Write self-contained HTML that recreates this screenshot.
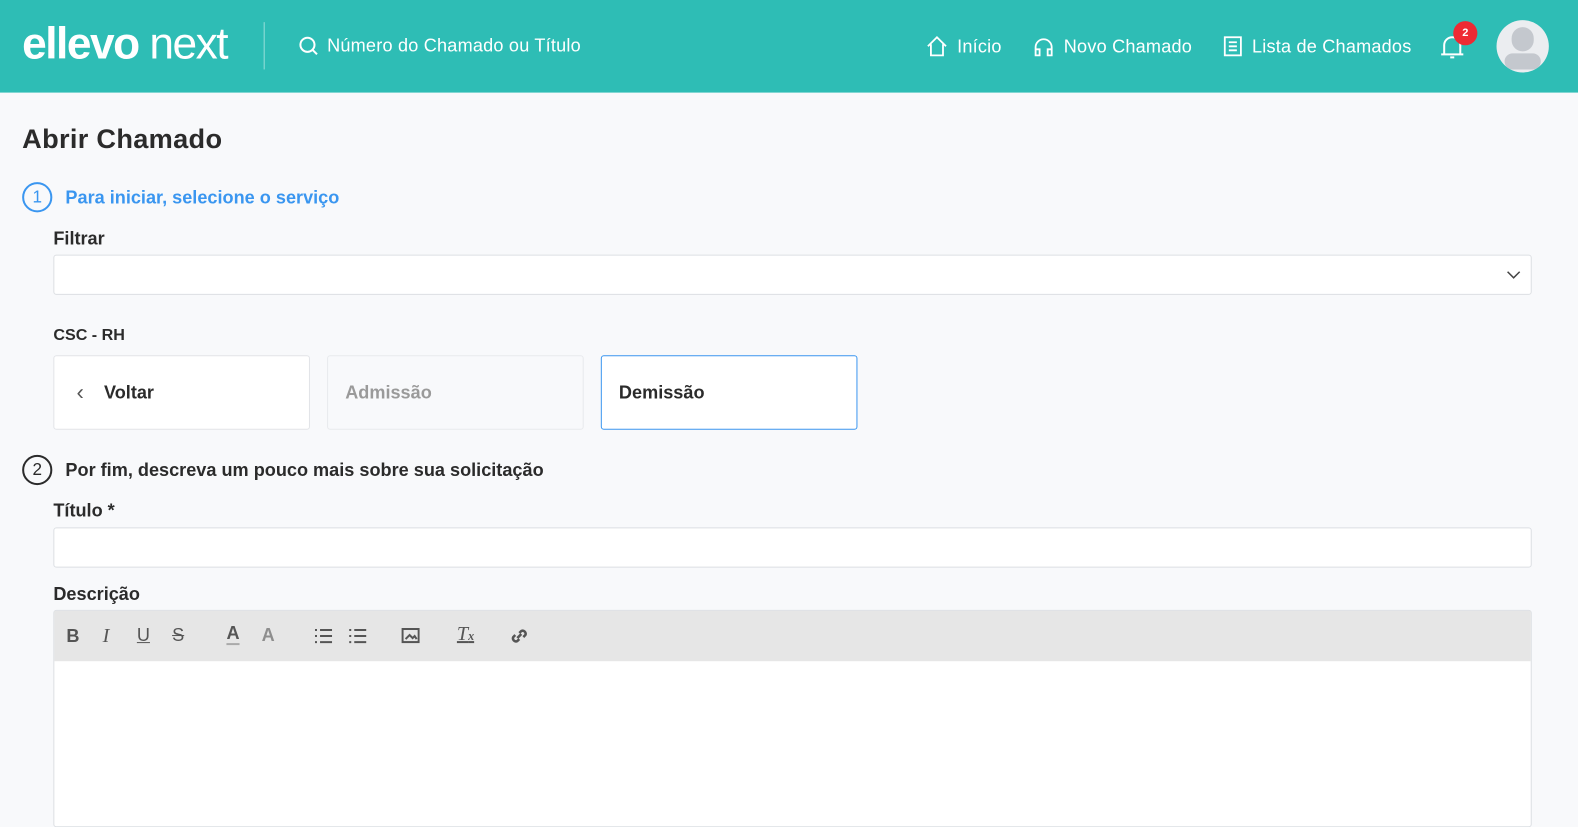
<!DOCTYPE html>
<html><head><meta charset="utf-8"><style>
*{box-sizing:border-box;margin:0;padding:0}
html,body{width:1578px;height:822px;overflow:hidden;background:#f8f9fb}
body{font-family:"Liberation Sans",sans-serif;color:#2b2b2b}
#w{position:absolute;left:0;top:0;width:1570px;height:822px;transform:scale(1.0064);transform-origin:0 0}
.hdr{height:92px;background:#2ebdb5;position:relative;color:#fff;width:1578px}
.logo{position:absolute;left:22px;top:18px;font-size:44px;letter-spacing:-1.5px;line-height:52px}
.logo b{font-weight:700}.logo span{font-weight:400}
.sep{position:absolute;left:262px;top:22px;width:1px;height:47px;background:rgba(255,255,255,.5)}
.srch{position:absolute;left:297px;top:35px;font-size:18px;display:flex;align-items:center;gap:8px;letter-spacing:.2px}
.nav{position:absolute;top:35px;font-size:18px;display:flex;align-items:center;gap:9px;letter-spacing:.2px}
.badge{position:absolute;left:1444px;top:21px;width:24px;height:24px;border-radius:12px;background:#ee2a33;font-size:11px;font-weight:700;text-align:center;line-height:24px}
.av{position:absolute;left:1487px;top:20px;width:52px;height:52px;border-radius:26px;background:#ebedf0;overflow:hidden}
h1{position:absolute;left:22px;top:123px;font-size:27px;font-weight:700;letter-spacing:.3px}
.step{position:absolute;left:22px;display:flex;align-items:center;gap:13px;font-size:18px;font-weight:700}
.circ{width:30px;height:30px;border-radius:15px;border:2px solid;display:flex;align-items:center;justify-content:center;font-weight:400;font-size:17px}
.lbl{position:absolute;left:53px;font-size:18px;font-weight:700}
.inp{position:absolute;left:53px;width:1469px;height:40px;background:#fff;border:1px solid #dcdfe3;border-radius:3px}
.card{position:absolute;top:353px;width:255px;height:74px;background:#fff;border:1px solid #e2e4e8;border-radius:3px;font-size:18px;font-weight:700;display:flex;align-items:center;padding-left:17px}
</style></head><body><div id="w">
<div class="hdr">
<div class="logo"><b>ellevo</b> <span>next</span></div>
<div class="sep"></div>
<div class="srch"><svg width="20" height="20" viewBox="0 0 20 20" fill="none" stroke="#fff" stroke-width="2"><circle cx="8.5" cy="8.5" r="7"/><path d="M13.5 13.5L18 18"/></svg>Número do Chamado ou Título</div>
<div class="nav" style="left:920px"><svg width="22" height="22" viewBox="0 0 22 22" fill="none" stroke="#fff" stroke-width="1.8"><path d="M2 11L11 2l9 9M5 9v11h12V9"/></svg>Início</div>
<div class="nav" style="left:1026px"><svg width="22" height="22" viewBox="0 0 22 22" fill="none" stroke="#fff" stroke-width="1.8"><path d="M3 19v-7a8 8 0 0 1 16 0v7M3 14h4v6H3zM15 14h4v6h-4z"/></svg>Novo Chamado</div>
<div class="nav" style="left:1215px"><svg width="20" height="22" viewBox="0 0 20 22" fill="none" stroke="#fff" stroke-width="1.8"><rect x="2" y="2" width="16" height="18"/><path d="M6 7h8M6 11h8M6 15h8"/></svg>Lista de Chamados</div>
<svg style="position:absolute;left:1430px;top:33px" width="26" height="28" viewBox="0 0 26 28" fill="none" stroke="#fff" stroke-width="2"><path d="M5 21V12a8 8 0 0 1 16 0v9M2 21h22M11 24h4"/></svg>
<div class="badge">2</div>
<div class="av"><div style="position:absolute;left:15px;top:7px;width:22px;height:24px;border-radius:11px;background:#c4c8ce"></div><div style="position:absolute;left:8px;top:33px;width:36px;height:16px;border-radius:8px;background:#c4c8ce"></div></div>
</div>
<h1>Abrir Chamado</h1>
<div class="step" style="top:181px;color:#3a96f0"><div class="circ">1</div>Para iniciar, selecione o serviço</div>
<div class="lbl" style="top:227px">Filtrar</div>
<div class="inp" style="top:253px"><svg style="position:absolute;right:10px;top:14px" width="14" height="10" viewBox="0 0 14 10" fill="none" stroke="#444" stroke-width="1.5"><path d="M1 2l6 6 6-6"/></svg></div>
<div class="lbl" style="top:325px;font-size:16px">CSC - RH</div>
<div class="card" style="left:53px;padding-left:22px"><span style="font-weight:400;color:#555;margin-right:20px;font-size:22px">&#8249;</span>Voltar</div>
<div class="card" style="left:325px;color:#9a9a9a;background:#f8f9fb;border-color:#e8eaed">Admissão</div>
<div class="card" style="left:597px;border-color:#3a96f0">Demissão</div>
<div class="step" style="top:452px;color:#2b2b2b"><div class="circ">2</div>Por fim, descreva um pouco mais sobre sua solicitação</div>
<div class="lbl" style="top:497px">Título *</div>
<div class="inp" style="top:524px"></div>
<div class="lbl" style="top:580px">Descrição</div>
<div style="position:absolute;left:53px;top:606px;width:1469px;height:216px;background:#fff;border:1px solid #dcdfe3;border-radius:3px">
<div style="height:50px;background:#e6e6e6;position:relative;color:#555;font-size:18px">
<b style="position:absolute;left:12px;top:15px">B</b>
<i style="position:absolute;left:48px;top:14px;font-family:'Liberation Serif';font-size:20px">I</i>
<u style="position:absolute;left:82px;top:14px">U</u>
<s style="position:absolute;left:117px;top:14px">S</s>
<b style="position:absolute;left:171px;top:12px;border-bottom:2px solid #aaa;line-height:20px">A</b>
<b style="position:absolute;left:206px;top:14px;opacity:.6">A</b>
<svg style="position:absolute;left:258px;top:16px" width="18" height="18" viewBox="0 0 18 18" fill="none" stroke="#555" stroke-width="2"><path d="M6 3h12M6 9h12M6 15h12M1 3h2M1 9h2M1 15h2"/></svg>
<svg style="position:absolute;left:292px;top:16px" width="18" height="18" viewBox="0 0 18 18" fill="none" stroke="#555" stroke-width="2"><path d="M6 3h12M6 9h12M6 15h12M1 3h2M1 9h2M1 15h2"/></svg>
<svg style="position:absolute;left:345px;top:17px" width="18" height="16" viewBox="0 0 18 16" fill="none" stroke="#555" stroke-width="2"><rect x="1" y="1" width="16" height="13"/><path d="M4 11l4-4 3 3 2-2 2 3"/></svg>
<i style="position:absolute;left:400px;top:12px;font-family:'Liberation Serif';text-decoration:underline;font-size:20px">T<small style="font-size:12px;font-weight:700">x</small></i>
<svg style="position:absolute;left:452px;top:15px" width="20" height="20" viewBox="0 0 20 20" fill="none" stroke="#555" stroke-width="2.5"><path d="M8 12l4-4M6 9l-2 2a3 3 0 0 0 4 4l2-2M14 11l2-2a3 3 0 0 0-4-4l-2 2"/></svg>
</div></div>
</div></body></html>
